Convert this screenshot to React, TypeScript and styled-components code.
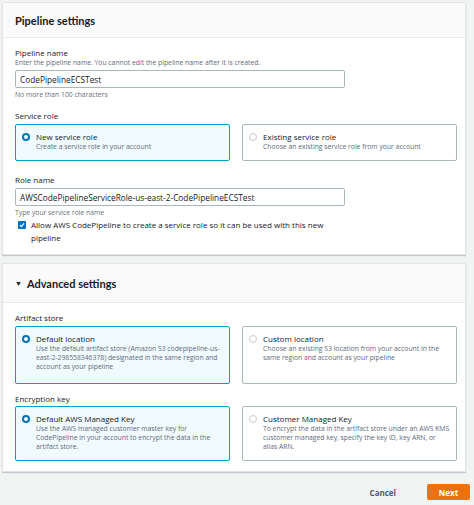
import React from "react";
import styled, { createGlobalStyle } from "styled-components";

const Global = createGlobalStyle`
  html, body { margin: 0; padding: 0; background: #f2f3f3; }
  body { font-family: "Open Sans", "Noto Sans", sans-serif; color: #16191f; }
  * { box-sizing: border-box; }
`;

const Page = styled.div`
  width: 474px;
  height: 505px;
  padding: 2px 4px 0 2px;
  display: flex;
  flex-direction: column;
  background: #f2f3f3;
`;

const Card = styled.section<{ $mt?: number }>`
  background: #fff;
  border: 1px solid #e3e5e5;
  box-shadow: 0 1px 1px rgba(0, 31, 63, 0.2);
  margin: ${(p) => p.$mt ?? 0}px 4px 0 0;
  display: flex;
  flex-direction: column;
`;

const Header = styled.div<{ $h: number }>`
  height: ${(p) => p.$h}px;
  background: #fafafa;
  border-bottom: 1px solid #eaeded;
  display: flex;
  align-items: center;
  padding-left: 12px;
  font-family: Lato, "Open Sans", sans-serif;
  font-size: 11px;
  font-weight: 700;
  gap: 5px;
`;

const Caret = styled.span`
  font-size: 7px;
  line-height: 1;
`;

const Body = styled.div<{ $pb: number }>`
  padding: 8px 7px ${(p) => p.$pb}px 12px;
  display: flex;
  flex-direction: column;
`;

const Label = styled.div<{ $mt?: number }>`
  font-size: 8px;
  line-height: 11px;
  margin-top: ${(p) => p.$mt ?? 0}px;
`;

const Desc = styled.div`
  font-size: 6.8px;
  line-height: 9px;
  color: #5f6b7a;
`;

const Hint = styled.div`
  font-size: 6.8px;
  line-height: 9px;
  color: #687078;
  margin-top: 2px;
`;

const Input = styled.div`
  width: 330px;
  height: 18px;
  border: 1px solid #aab7b8;
  border-radius: 2px;
  margin-top: 3px;
  display: flex;
  align-items: center;
  padding-left: 4px;
  font-size: 8.3px;
`;

const Tiles = styled.div<{ $mt: number }>`
  display: grid;
  grid-template-columns: 215px 215px;
  gap: 12px;
  margin-top: ${(p) => p.$mt}px;
`;

const Tile = styled.div<{ $sel?: boolean; $h: number }>`
  height: ${(p) => p.$h}px;
  border: 1px solid ${(p) => (p.$sel ? "#00a1c9" : "#aab7b8")};
  background: ${(p) => (p.$sel ? "#f1faff" : "#fff")};
  border-radius: 2px;
  padding: 6px 5px 0 6px;
  display: flex;
  gap: 6px;
  align-items: flex-start;
`;

const Radio = styled.span<{ $sel?: boolean }>`
  flex: none;
  width: 8px;
  height: 8px;
  border-radius: 50%;
  margin-top: 2px;
  border: ${(p) => (p.$sel ? "2.4px solid #0073bb" : "1px solid #c8cccc")};
  background: #fff;
`;

const TileText = styled.div`
  display: flex;
  flex-direction: column;
`;

const TileTitle = styled.div`
  font-size: 8px;
  line-height: 11px;
`;

const Check = styled.label`
  display: flex;
  gap: 5px;
  margin-top: 1px;
  font-size: 8px;
  line-height: 13px;
  padding-left: 3px;
`;

const CheckText = styled.span`
  max-width: 300px;
`;

const Box = styled.span`
  flex: none;
  width: 8px;
  height: 8px;
  margin-top: 3px;
  border-radius: 1px;
  background: #0073bb;
  display: flex;
  align-items: center;
  justify-content: center;
`;

const Footer = styled.div`
  display: flex;
  justify-content: flex-end;
  align-items: center;
  gap: 31px;
  margin-top: 12px;
`;

const Cancel = styled.span`
  font-size: 8px;
  font-weight: 700;
  color: #545b64;
`;

const Next = styled.span`
  width: 43px;
  height: 16px;
  background: #ec7211;
  color: #fff;
  font-size: 8px;
  font-weight: 700;
  display: flex;
  align-items: center;
  justify-content: center;
  border-radius: 2px;
`;

export default function App() {
  return (
    <Page>
      <Global />
      <Card>
        <Header $h={35}>Pipeline settings</Header>
        <Body $pb={10}>
          <Label $mt={1}>Pipeline name</Label>
          <Desc>Enter the pipeline name. You cannot edit the pipeline name after it is created.</Desc>
          <Input>CodePipelineECSTest</Input>
          <Hint>No more than 100 characters</Hint>
          <Label $mt={11}>Service role</Label>
          <Tiles $mt={3}>
            <Tile $sel $h={37}>
              <Radio $sel />
              <TileText>
                <TileTitle>New service role</TileTitle>
                <Desc>Create a service role in your account</Desc>
              </TileText>
            </Tile>
            <Tile $h={37}>
              <Radio />
              <TileText>
                <TileTitle>Existing service role</TileTitle>
                <Desc>Choose an existing service role from your account</Desc>
              </TileText>
            </Tile>
          </Tiles>
          <Label $mt={13}>Role name</Label>
          <Input>AWSCodePipelineServiceRole-us-east-2-CodePipelineECSTest</Input>
          <Hint>Type your service role name</Hint>
          <Check>
            <Box>
              <svg width="6" height="6" viewBox="0 0 6 6">
                <path d="M1 3.2 L2.4 4.6 L5 1.4" stroke="#fff" strokeWidth="1.2" fill="none" />
              </svg>
            </Box>
            <CheckText>Allow AWS CodePipeline to create a service role so it can be used with this new pipeline</CheckText>
          </Check>
        </Body>
      </Card>
      <Card $mt={8}>
        <Header $h={39}>
          <Caret>▼</Caret>Advanced settings
        </Header>
        <Body $pb={10}>
          <Label $mt={1}>Artifact store</Label>
          <Tiles $mt={3}>
            <Tile $sel $h={58}>
              <Radio $sel />
              <TileText>
                <TileTitle>Default location</TileTitle>
                <Desc>
                  Use the default artifact store (Amazon S3 codepipeline-us-east-2-298558346378) designated in the same
                  region and account as your pipeline
                </Desc>
              </TileText>
            </Tile>
            <Tile $h={58}>
              <Radio />
              <TileText>
                <TileTitle>Custom location</TileTitle>
                <Desc>Choose an existing S3 location from your account in the same region and account as your pipeline</Desc>
              </TileText>
            </Tile>
          </Tiles>
          <Label $mt={9}>Encryption key</Label>
          <Tiles $mt={2}>
            <Tile $sel $h={55}>
              <Radio $sel />
              <TileText>
                <TileTitle>Default AWS Managed Key</TileTitle>
                <Desc>
                  Use the AWS managed customer master key for CodePipeline in your account to encrypt the data in the
                  artifact store.
                </Desc>
              </TileText>
            </Tile>
            <Tile $h={55}>
              <Radio />
              <TileText>
                <TileTitle>Customer Managed Key</TileTitle>
                <Desc>
                  To encrypt the data in the artifact store under an AWS KMS customer managed key, specify the key ID, key
                  ARN, or alias ARN.
                </Desc>
              </TileText>
            </Tile>
          </Tiles>
        </Body>
      </Card>
      <Footer>
        <Cancel>Cancel</Cancel>
        <Next>Next</Next>
      </Footer>
    </Page>
  );
}
